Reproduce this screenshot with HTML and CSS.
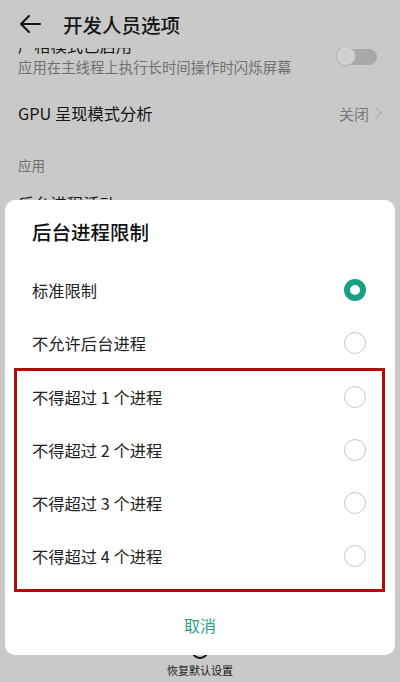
FILE: index.html
```html
<!DOCTYPE html>
<html>
<head>
    <title>开发人员选项</title>
    <link rel="stylesheet" href="styles.css">
</head>
<body>
    <div class="page">
        <div class="header">
            <svg class="back" width="22" height="20" viewBox="0 0 22 20">
                <path d="M10 2 L2 10 L10 18 M2 10 H21" fill="none" stroke="#141414" stroke-width="2" stroke-linecap="round" stroke-linejoin="round"/>
            </svg>
            <span class="title">开发人员选项</span>
        </div>

        <div class="content">
            <div class="item first">
                <div class="item-text">
                    <div class="item-title">严格模式已启用</div>
                    <div class="item-sub">应用在主线程上执行长时间操作时闪烁屏幕</div>
                </div>
                <div class="toggle"><span class="knob"></span></div>
            </div>
            <div class="item gpu">
                <div class="item-title">GPU 呈现模式分析</div>
                <div class="item-value">关闭 <span class="chev"></span></div>
            </div>
            <div class="section">应用</div>
            <div class="item">
                <div class="item-title">后台进程活动</div>
            </div>
        </div>

        <div class="footer">
            <svg width="24" height="24" viewBox="0 0 24 24">
                <path d="M20 12 A8 8 0 1 1 12 4" fill="none" stroke="#111" stroke-width="2"/>
            </svg>
            <div class="footer-text">恢复默认设置</div>
        </div>
    </div>

    <div class="dialog">
        <div class="dialog-title">后台进程限制</div>
        <div class="option">
            <span>标准限制</span>
            <span class="radio checked"></span>
        </div>
        <div class="option">
            <span>不允许后台进程</span>
            <span class="radio"></span>
        </div>
        <div class="mark">
            <div class="option">
                <span>不得超过 1 个进程</span>
                <span class="radio"></span>
            </div>
            <div class="option">
                <span>不得超过 2 个进程</span>
                <span class="radio"></span>
            </div>
            <div class="option">
                <span>不得超过 3 个进程</span>
                <span class="radio"></span>
            </div>
            <div class="option">
                <span>不得超过 4 个进程</span>
                <span class="radio"></span>
            </div>
        </div>
        <div class="cancel">取消</div>
    </div>
</body>
</html>
```

FILE: styles.css
```css
body {
    margin: 0;
    height: 682px;
    overflow: hidden;
    background-color: #c9c9c9;
    font-family: "Noto Sans CJK SC", "Noto Sans", sans-serif;
    color: #161616;
}
.page {
    height: 682px;
    display: flex;
    flex-direction: column;
}
.header {
    height: 48px;
    display: flex;
    align-items: center;
    padding-left: 19px;
    background-color: #c9c9c9;
    position: relative;
    z-index: 1;
    flex-shrink: 0;
}
.back {
    margin-right: 22px;
}
.title {
    font-size: 19.5px;
    font-weight: 500;
}
.content {
    flex: 1;
    overflow: hidden;
    padding: 0 18px;
}
.item {
    display: flex;
    align-items: center;
    justify-content: space-between;
}
.item.first {
    margin-top: -14px;
}
.item-title {
    font-size: 16.3px;
    line-height: 22px;
}
.item-sub {
    font-size: 14.4px;
    line-height: 20px;
    margin-top: 1px;
    color: #707070;
}
.toggle {
    width: 40px;
    height: 16px;
    border-radius: 8px;
    background-color: #a8a8a8;
    position: relative;
    margin-right: 5px;
    margin-top: 3px;
}
.knob {
    position: absolute;
    left: -1px;
    top: -3px;
    width: 20px;
    height: 20px;
    border-radius: 50%;
    background-color: #d2d2d2;
    border: 1px solid #b0b0b0;
    box-sizing: border-box;
}
.gpu {
    margin-top: 25px;
}
.item-value {
    font-size: 15px;
    color: #777;
    display: flex;
    align-items: center;
    margin-right: 2px;
}
.chev {
    display: inline-block;
    width: 7px;
    height: 7px;
    border-top: 1.5px solid #aaa;
    border-right: 1.5px solid #aaa;
    transform: rotate(45deg);
    margin-left: 3px;
}
.section {
    margin-top: 32px;
    font-size: 13.5px;
    line-height: 18px;
    color: #707070;
}
.section + .item {
    margin-top: 18px;
}
.footer {
    display: flex;
    flex-direction: column;
    align-items: center;
    padding-bottom: 4px;
}
.footer-text {
    font-size: 11px;
    line-height: 16px;
    color: #1a1a1a;
}
.dialog {
    position: absolute;
    top: 200px;
    left: 5px;
    width: 390px;
    height: 455px;
    background-color: #fff;
    border-radius: 10px;
    box-sizing: border-box;
}
.dialog-title {
    margin: 20px 0 19px 27px;
    font-size: 19.5px;
    line-height: 24px;
    font-weight: 500;
    color: #111;
}
.option {
    height: 53px;
    display: flex;
    align-items: center;
    justify-content: space-between;
    padding: 0 29px 0 27px;
    font-size: 16.3px;
    color: #222;
}
.radio {
    width: 22px;
    height: 22px;
    border-radius: 50%;
    border: 1.5px solid #c6c6c6;
    box-sizing: border-box;
}
.radio.checked {
    border: 6px solid #17a085;
}
.mark {
    border: 3px solid #b30a0a;
    margin: -1.5px 10px 0 9px;
    padding-bottom: 6px;
}
.mark .option {
    padding: 0 16px 0 15px;
}
.cancel {
    margin-top: 21px;
    text-align: center;
    font-size: 16px;
    line-height: 24px;
    color: #2a9f88;
}
```
